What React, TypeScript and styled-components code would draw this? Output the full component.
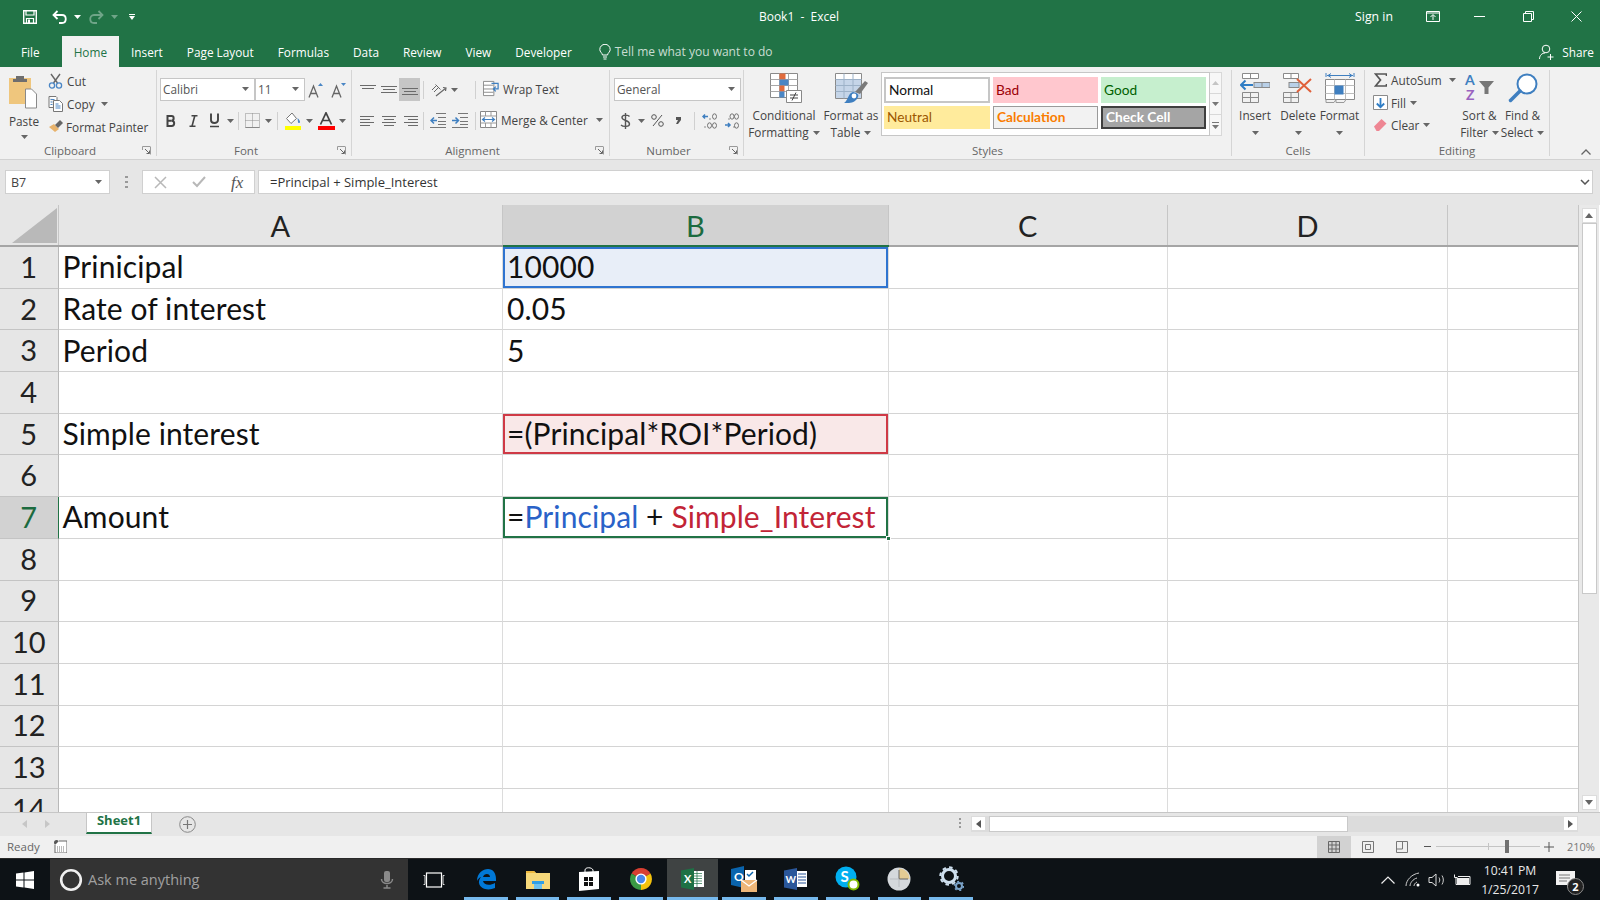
import React from "react";
import styled, { createGlobalStyle } from "styled-components";

const UI = `"Open Sans", "Noto Sans", "Liberation Sans", sans-serif`;
const CELL = `Lato, "Liberation Sans", sans-serif`;

const Global = createGlobalStyle`
  html, body { margin: 0; padding: 0; width: 1600px; height: 900px; overflow: hidden; background: #fff; }
  #root { width: 1600px; height: 900px; }
  * { box-sizing: border-box; }
`;

const Window = styled.div`
  width: 1600px; height: 900px; display: flex; flex-direction: column; font-family: ${UI}; overflow: hidden;
`;
const Svg = styled.svg`display: block; flex-shrink: 0;`;

/* ---------- generic icons ---------- */
const Chev = ({ c = "#666" }: { c?: string }) => (
  <Svg width="7" height="4" viewBox="0 0 7 4"><path d="M0 0h7L3.5 4z" fill={c} /></Svg>
);
const Launcher = () => (
  <Svg width="9" height="9" viewBox="0 0 9 9"><path d="M.5 4V.5H8M8.5 .5V8.5" fill="none" stroke="#9a9a9a" /><path d="M3 3l4 4M4.5 7.5h3v-3" fill="none" stroke="#666" /></Svg>
);
const Lines = ({ ys, xs }: { ys: number[]; xs: [number, number][] }) => (
  <Svg width="16" height="16" viewBox="0 0 16 16">
    {ys.map((y, i) => <path key={i} d={`M${xs[i][0]} ${y + 0.5}H${xs[i][1]}`} stroke="#6b6b6b" />)}
  </Svg>
);

/* ---------- title bar ---------- */
const TitleBar = styled.div`
  height: 33px; background: #217346; display: grid; grid-template-columns: 1fr auto 1fr; align-items: center; color: #fff;
`;
const QuickAccess = styled.div`display: flex; align-items: center; padding-left: 14px;`;
const QatSlot = styled.div<{ $w: number }>`
  width: ${p => p.$w}px; height: 33px; display: flex; align-items: center; justify-content: center;
`;
const TitleText = styled.div`font-size: 12px; white-space: pre; margin-left: -2px;`;
const WindowControls = styled.div`display: flex; align-items: center; justify-content: flex-end;`;
const SignIn = styled.span`font-size: 12.3px; margin-right: 18px;`;
const WinBtn = styled.div<{ $w: number }>`
  width: ${p => p.$w}px; height: 33px; display: flex; align-items: center; justify-content: center;
`;

/* ---------- tabs ---------- */
const TabBar = styled.div`
  height: 34px; background: #217346; display: flex; align-items: flex-end; color: #fff; font-size: 11.8px; padding-left: 9px;
`;
const Tab = styled.div<{ $active?: boolean; $first?: boolean }>`
  height: 31px; padding: 0 12px; display: flex; align-items: center; white-space: nowrap;
  ${p => p.$first ? "margin-right: 10px;" : ""}
  ${p => p.$active ? "background:#f1f1f1;color:#217346;" : ""}
`;
const TellMe = styled.div`
  height: 31px; display: flex; align-items: center; gap: 4px; margin-left: 15px; color: #c9ddd2; white-space: nowrap; font-size: 12px;
`;
const Share = styled.div`
  height: 31px; margin-left: auto; padding-right: 6px; display: flex; align-items: center; gap: 7px;
`;

/* ---------- ribbon ---------- */
const Ribbon = styled.div`
  height: 93px; background: #f1f1f1; border-bottom: 1px solid #d2d2d2; display: flex; padding-top: 3px;
  font-size: 11.8px; color: #444; position: relative;
`;
const Group = styled.div<{ $w: number }>`
  width: ${p => p.$w}px; height: 86px; border-right: 1px solid #d5d5d5; display: flex; flex-direction: column; flex-shrink: 0;
`;
const GroupBody = styled.div`height: 73px; display: flex; flex-shrink: 0;`;
const GroupFoot = styled.div`
  height: 16px; margin-bottom: -3px; padding-bottom: 2px; display: flex; align-items: center; color: #666; font-size: 11.5px;
`;
const GroupLabel = styled.div`flex: 1; text-align: center;`;
const LauncherSlot = styled.div`width: 16px; padding-left: 2px; display: flex; justify-content: flex-start;`;

const PasteBtn = styled.div`
  width: 48px; display: flex; flex-direction: column; align-items: center; padding-top: 3px;
`;
const BigText = styled.div`line-height: 17px; height: 17px; white-space: nowrap; text-align: center; display: flex; align-items: center; justify-content: center; gap: 4px;`;
const SmallCol = styled.div`display: flex; flex-direction: column; margin-top: -1px;`;
const SmallRow = styled.div`
  height: 23px; display: flex; align-items: center; gap: 3px; white-space: nowrap;
`;
const EditCol = styled.div`
  width: 93px; padding-left: 8px; margin-top: -1px; display: flex; flex-direction: column;
  & > div { height: 22.5px; gap: 4px; }
`;
const IconBox = styled.div<{ $w: number }>`
  width: ${p => p.$w}px; display: flex; justify-content: center; flex-shrink: 0;
`;
const Stack = styled.div<{ $pl: number }>`
  flex: 1; display: flex; flex-direction: column; gap: 8px; padding: 8px 0 0 ${p => p.$pl}px;
`;
const ToolRow = styled.div`height: 23px; display: flex; align-items: center;`;
const Combo = styled.div<{ $w: number }>`
  width: ${p => p.$w}px; height: 23px; background: #fff; border: 1px solid #c6c6c6; display: flex; align-items: center;
  padding: 0 5px 2px 2px; justify-content: space-between; color: #555; flex-shrink: 0;
`;
const ToolBtn = styled.div<{ $w: number; $on?: boolean }>`
  width: ${p => p.$w}px; height: 23px; display: flex; align-items: center; justify-content: center; flex-shrink: 0;
  ${p => p.$on ? "background:#c6c6c6;" : ""}
`;
const VSep = styled.div<{ $m?: number; $r?: number }>`
  width: 1px; height: 18px; background: #d0d0d0; margin: 0 ${p => p.$r ?? p.$m ?? 4}px 0 ${p => p.$m ?? 4}px; flex-shrink: 0;
`;
const WithText = styled.div<{ $gap?: number }>`
  display: flex; align-items: center; gap: ${p => p.$gap ?? 4}px; white-space: nowrap; padding-bottom: 2px;
`;
const BigBtn = styled.div<{ $w: number; $ml?: number }>`
  width: ${p => p.$w}px; margin-left: ${p => p.$ml ?? 0}px; display: flex; flex-direction: column; align-items: center; padding-top: 3px; flex-shrink: 0;
`;
const BigIcon = styled.div<{ $shift?: number }>`
  height: 34px; display: flex; align-items: flex-start; justify-content: center; padding-left: ${p => p.$shift ?? 0}px;
`;
const Gallery = styled.div`
  width: 341px; height: 64px; margin: 2px 0 0 -1px; display: flex; flex-shrink: 0; position: relative;
`;
const GalleryGrid = styled.div`
  width: 329px; height: 64px; background: #fff; border: 1px solid #c6c6c6; display: grid;
  grid-template-columns: 106px 105px 105px; grid-template-rows: 26px 23px; column-gap: 3px; row-gap: 3px; padding: 4px 0 0 2px;
`;
const Style = styled.div<{ $bg: string; $fg: string; $bd?: string; $bw?: number; $bold?: boolean }>`
  background: ${p => p.$bg}; color: ${p => p.$fg}; font-family: ${CELL}; font-size: 13.7px; padding: 0 0 2px 3px;
  font-weight: ${p => p.$bold ? 700 : 400}; display: flex; align-items: center; height: 100%;
  ${p => p.$bd ? `border: ${p.$bw ?? 1}px solid ${p.$bd};` : ""}
`;
const GalleryScroll = styled.div`
  width: 12px; height: 64px; display: flex; flex-direction: column; gap: 0;
`;
const GalleryBtn = styled.div`
  flex: 1; background: #f7f7f7; border: 1px solid #d8d8d8; border-left: 0; display: flex; align-items: center; justify-content: center;
  & + & { border-top: 0; }
`;
const Collapse = styled.div`position: absolute; right: 9px; bottom: 4px;`;

/* ---------- formula bar ---------- */
const FormulaBar = styled.div`
  height: 45px; background: #e6e6e6; display: flex; align-items: flex-start; padding: 10px 7px 0 5px; flex-shrink: 0;
`;
const NameBox = styled.div`
  width: 105px; height: 24px; background: #fff; border: 1px solid #d0d0d0; display: flex; align-items: center; justify-content: space-between;
  padding: 0 7px 0 5px; font-size: 12.5px; color: #444;
`;
const Grip = styled.div`
  width: 32px; height: 24px; display: flex; align-items: center; justify-content: center;
`;
const FxBox = styled.div`
  width: 113px; height: 24px; background: #fff; border: 1px solid #d0d0d0; display: flex; align-items: center;
  padding-left: 11px; gap: 25px; flex-shrink: 0;
`;
const FormulaInput = styled.div`
  flex: 1; margin-left: 3px; height: 24px; background: #fff; border: 1px solid #d0d0d0; display: flex; align-items: center;
  justify-content: space-between; padding: 0 2px 0 11px; font-family: ${UI}; font-size: 13px; color: #333;
`;
const FxGlyph = styled.span`font-family: "Liberation Serif", serif; font-style: italic; font-size: 17px; color: #555; line-height: 1;`;

/* ---------- sheet ---------- */
const SheetArea = styled.div`height: 607px; display: flex; flex-shrink: 0;`;
const GridWrap = styled.div`width: 1579px; overflow: hidden; background: #fff; border-right: 1px solid #c6c6c6;`;
const cols = "58.5px 444.5px 385.5px 279.5px 280px 131px";
const HeaderRow = styled.div`
  display: grid; grid-template-columns: ${cols}; height: 42px; background: #e6e6e6; border-bottom: 2px solid #a5a5a5;
`;
const Corner = styled.div`
  position: relative; display: flex; justify-content: flex-end; align-items: flex-end; padding: 0 1px 2px 0; border-right: 1px solid #c6c6c6;
`;
const ColHead = styled.div<{ $active?: boolean }>`
  display: flex; align-items: center; justify-content: center; font-family: ${CELL}; font-size: 29px; color: ${p => p.$active ? "#1c6b3f" : "#222"};
  border-right: 1px solid #c6c6c6; height: 40px;
  ${p => p.$active ? "background:#d2d2d2;box-shadow: 0 2px 0 #217346;" : ""}
`;
const Row = styled.div`
  display: grid; grid-template-columns: ${cols}; height: 41.7px;
`;
const RowHead = styled.div<{ $active?: boolean }>`
  display: flex; align-items: center; justify-content: center; font-family: ${CELL}; font-size: 29px; padding-bottom: 2px;
  background: ${p => p.$active ? "#d2d2d2" : "#e6e6e6"}; color: ${p => p.$active ? "#1c6b3f" : "#222"};
  border-bottom: 1px solid #c4c4c4; border-right: 1px solid ${p => p.$active ? "#217346" : "#b8b8b8"};
`;
const Cell = styled.div<{ $fill?: string; $bd?: string }>`
  display: flex; align-items: center; padding: 0 0 2px 4px; font-family: ${CELL}; font-size: 30px; color: #111; letter-spacing: 0.1px; white-space: nowrap;
  position: relative; background: ${p => p.$fill ?? "#fff"};
  border-right: 1px solid #dcdcdc; border-bottom: 1px solid #d4d4d4;
  ${p => p.$bd ? `box-shadow: inset 0 0 0 2px ${p.$bd}; z-index: 1;` : ""}
`;
const Handle = styled.span`
  position: absolute; right: -3px; bottom: -3px; width: 5px; height: 5px; background: #217346; border: 1px solid #fff;
`;
const Ref = styled.span<{ $c: string }>`color: ${p => p.$c};`;
const VScroll = styled.div`
  width: 20px; background: #e9e9e9; display: flex; flex-direction: column; align-items: center; padding: 3px 0 2px;
`;
const ScrollBtn = styled.div`
  width: 15px; height: 15px; background: #fff; border: 1px solid #dcdcdc; display: flex; align-items: center; justify-content: center; flex-shrink: 0;
`;
const VThumb = styled.div`width: 15px; height: 371px; background: #fff; border: 1px solid #c9c9c9; flex-shrink: 0;`;
const Spacer = styled.div`flex: 1;`;

/* ---------- sheet tabs ---------- */
const SheetBar = styled.div`
  height: 24px; background: #e6e6e6; border-top: 1px solid #c6c6c6; display: flex; align-items: flex-start; flex-shrink: 0;
`;
const NavArrows = styled.div`
  width: 86px; height: 21px; display: flex; align-items: center; gap: 18px; padding-left: 22px;
`;
const SheetTab = styled.div`
  width: 66px; height: 21px; background: #fff; color: #217346; font-weight: 700; font-size: 13px; display: flex; align-items: center; justify-content: center;
  border: 1px solid #c6c6c6; border-top: 0; border-bottom: 2px solid #217346; padding-bottom: 5px;
`;
const AddSheet = styled.div`
  margin-left: 27px; height: 23px; display: flex; align-items: center;
`;
const HScroll = styled.div`
  margin: 3px 22px 0 9px; width: 607px; height: 16px; display: flex; background: #dcdcdc; align-items: stretch; position: relative;
`;
const HThumb = styled.div`width: 359px; margin-left: 3px; background: #fff; border: 1px solid #c9c9c9;`;
const HGrip = styled.div`display: flex; align-items: center; height: 21px; margin-left: auto;`;

/* ---------- status ---------- */
const StatusBar = styled.div`
  height: 22px; background: #f0f0f0; display: flex; align-items: center; padding: 0 0 1px 7px; font-size: 11.5px; color: #666; flex-shrink: 0;
`;
const StatusRight = styled.div`margin-left: auto; display: flex; align-items: center; height: 22px;`;
const ViewBtn = styled.div<{ $on?: boolean }>`
  width: 34px; height: 22px; display: flex; align-items: center; justify-content: center; ${p => p.$on ? "background:#d2d2d2;" : ""}
`;
const ZoomTrack = styled.div`
  width: 104px; height: 1px; background: #c4c4c4; position: relative; margin: 0 4px;
`;
const ZoomMark = styled.span`position: absolute; left: 52px; top: -3px; width: 1px; height: 7px; background: #c4c4c4;`;
const ZoomThumb = styled.span`position: absolute; left: 69px; top: -6px; width: 4px; height: 13px; background: #707070;`;
const ZoomPct = styled.div`width: 46px; padding-left: 13px; font-size: 11px; color: #777; white-space: nowrap;`;
const ZoomSign = styled.div<{ $ml: number }>`
  margin-left: ${p => p.$ml}px; display: flex; align-items: center;
`;

/* ---------- taskbar ---------- */
const Taskbar = styled.div`
  height: 42px; background: #0d1216; border-top: 1px solid #2a2a2a; display: flex; align-items: stretch; flex-shrink: 0; color: #fff;
`;
const Start = styled.div`width: 50px; display: flex; align-items: center; justify-content: center;`;
const Search = styled.div`
  width: 358px; background: #333; display: flex; align-items: center; padding: 0 14px 0 9px; color: #a0a0a0; font-size: 14.5px; gap: 5px;
`;
const SearchText = styled.span`flex: 1;`;
const TaskView = styled.div`width: 52px; display: flex; align-items: center; justify-content: center;`;
const App = styled.div<{ $active?: boolean }>`
  width: 51.7px; display: flex; align-items: center; justify-content: center; position: relative; padding-bottom: 2px;
  ${p => p.$active ? "background:#3f4343;" : ""}
  &::after { content: ""; position: absolute; left: ${p => p.$active ? 0 : 4}px; right: ${p => p.$active ? 0 : 4}px; bottom: 0; height: 3px; background: #76b9ed; }
`;
const Tray = styled.div`margin-left: auto; display: flex; align-items: center; padding-right: 12px;`;
const TraySlot = styled.div`width: 24.5px; display: flex; align-items: center; justify-content: center;`;
const Clock = styled.div`
  width: 64px; margin-left: 4px; text-align: center; font-size: 12.2px; line-height: 19px; color: #e8e8e8; white-space: nowrap;
`;
const Notify = styled.div`width: 46px; display: flex; align-items: center; justify-content: center; position: relative; height: 100%;`;
const NotifyBadge = styled.span`
  position: absolute; left: 25px; top: 19px; width: 17px; height: 17px; border-radius: 50%; background: #222; border: 1px solid #888;
  font-size: 11px; font-weight: 700; display: flex; align-items: center; justify-content: center; color: #fff;
`;

/* ---------- ribbon icons ---------- */
const PasteIcon = () => (
  <Svg width="30" height="40" viewBox="0 0 30 40">
    <rect x="0" y="5" width="22" height="26" fill="#efc67d" />
    <path d="M7 3h8v3h3v3H4V6h3z" fill="#6e6e6e" />
    <path d="M16.5 16h6l5 5v14h-11z" fill="#fff" stroke="#8a8a8a" />
  </Svg>
);
const CutIcon = () => (
  <Svg width="16" height="16" viewBox="0 0 16 16">
    <path d="M3 1l6.5 9M12 1L5.5 10" stroke="#666" strokeWidth="1.4" fill="none" />
    <circle cx="4" cy="12.5" r="2.6" fill="none" stroke="#4a86c5" strokeWidth="1.3" />
    <circle cx="11" cy="12.5" r="2.6" fill="none" stroke="#4a86c5" strokeWidth="1.3" />
  </Svg>
);
const CopyIcon = () => (
  <Svg width="16" height="16" viewBox="0 0 16 16">
    <path d="M1 .5h7l1 1V5M1 .5v11h4" fill="#fff" stroke="#777" />
    <path d="M5.500 4.500h6l3 3v8h-9z" fill="#fff" stroke="#777" />
    <path d="M7.500 8h3M7.500 10h5M7.500 12h5M2.500 3.500h4M2.500 6h2M2.500 8.500h2" stroke="#4a86c5" />
  </Svg>
);
const PainterIcon = () => (
  <Svg width="15" height="14" viewBox="0 0 15 14">
    <path d="M1 7l5-3 5 5-4 3z" fill="#e8b36c" />
    <path d="M7 5l5-5 3 3-5 5z" fill="#666" />
  </Svg>
);
const GrowA = ({ up }: { up: boolean }) => (
  <Svg width="20" height="16" viewBox="0 0 20 16">
    <path d="M2 15.500L6.500 4 11 15.500M3.800 11.500h5.400" fill="none" stroke="#666" strokeWidth="1.3" />
    <path d={up ? "M11 4l2.500-3L16 4z" : "M11 1l2.500 3L16 1z"} fill="#4a86c5" />
  </Svg>
);
const BoldI = () => (<Svg width="10" height="12" viewBox="0 0 10 12"><path d="M1.500 1h4.200c2.600 0 2.600 4.500 0 4.700 3.300 0 3.300 5.300 0 5.300H1.500zM1.500 5.800h4" fill="none" stroke="#444" strokeWidth="2" /></Svg>);
const ItalicI = () => (<Svg width="9" height="12" viewBox="0 0 9 12"><path d="M2.500 .8h6M.5 11.200h6M5.800 .8L3 11.200" fill="none" stroke="#444" strokeWidth="1.6" /></Svg>);
const UnderI = () => (<Svg width="11" height="15" viewBox="0 0 11 15"><path d="M2 .5v6.500c0 4 7 4 7 0V.5" fill="none" stroke="#444" strokeWidth="1.9" /><path d="M1 13.500h9" stroke="#444" strokeWidth="1.5" /></Svg>);
const BordersI = () => (<Svg width="15" height="15" viewBox="0 0 15 15"><path d="M.5 .5h14v14H.5zM7.500 .5v14M.5 7.500h14" fill="none" stroke="#8c8c8c" strokeDasharray="1 1" /><path d="M.5 14.500h14" stroke="#888" /></Svg>);
const FillI = () => (
  <Svg width="17" height="18" viewBox="0 0 17 18">
    <path d="M7 1L1.500 6.500l4.500 5 5.500-5z" fill="#fff" stroke="#777" />
    <path d="M12.500 6c2 2 2.500 3 2.500 4 0 1.400-2 1.400-2 0z" fill="#4a86c5" />
    <rect x="0" y="14" width="16" height="4" fill="#ffff00" />
  </Svg>
);
const FontColorI = () => (
  <Svg width="17" height="18" viewBox="0 0 17 18">
    <path d="M2.500 12.500L8 .8l5.500 11.700M4.500 8.500h7" fill="none" stroke="#444" strokeWidth="1.7" />
    <rect x="0" y="14" width="17" height="4" fill="#ff0000" />
  </Svg>
);
const WrapI = () => (
  <Svg width="17" height="17" viewBox="0 0 18 17">
    <path d="M.5 1h11v15h-11z" fill="#fff" stroke="#8a8a8a" />
    <path d="M.5 5h10.500M.5 9h10.500M.5 12.500h10.500" stroke="#8a8a8a" />
    <path d="M9 3h7v6h-4M13.500 6.500L11 9l2.500 2.500" fill="none" stroke="#3f7fc0" strokeWidth="1.3" />
  </Svg>
);
const MergeI = () => (
  <Svg width="17" height="17" viewBox="0 0 17 17">
    <path d="M.5 .5h16v16H.5z" fill="#fff" stroke="#888" />
    <path d="M.5 5h16M.5 12h16M5.500 .5V5M11 .5V5M5.500 12v4.500M11 12v4.500" stroke="#999" />
    <path d="M2.500 8.500h12M5 6.500l-2.500 2 2.500 2M12 6.500l2.500 2-2.500 2" fill="none" stroke="#3f7fc0" strokeWidth="1.2" />
  </Svg>
);
const OrientI = () => (
  <Svg width="17" height="14" viewBox="0 0 17 14">
    <path d="M2 7l5-5M4 9l5-5M5.500 1.500l5 5" fill="none" stroke="#666" />
    <path d="M6 13l10-8M13 4.500l3 .5-.5 3" fill="none" stroke="#666" strokeWidth="1.2" />
  </Svg>
);
const IndentI = ({ out }: { out: boolean }) => (
  <Svg width="16" height="15" viewBox="0 0 16 15">
    <path d="M6 .5h10M8 4.500h8M8 8.500h8M8 11.500h8M0 14.500h16" stroke="#777" />
    <path d={out ? "M7 7.500H1M4 4.500l-3 3 3 3" : "M0 7.500h6M3.500 4.500l3 3-3 3"} fill="none" stroke="#3f7fc0" strokeWidth="1.5" />
  </Svg>
);
const DecI = ({ inc }: { inc: boolean }) => (
  <Svg width="18" height="16" viewBox="0 0 18 16">
    {inc ? <path d="M6 3.500H1M3 1.500l-2 2 2 2" fill="none" stroke="#3f7fc0" strokeWidth="1.5" /> : <path d="M1 12h5M4 10l2 2-2 2" fill="none" stroke="#3f7fc0" strokeWidth="1.5" />}
    <circle cx={inc ? 8 : 5} cy={inc ? 6 : 6} r=".7" fill="#666" />
    <circle cx={inc ? 3 : 10} cy={inc ? 14 : 14} r=".7" fill="#666" />
    <ellipse cx="12.500" cy={inc ? 3.500 : 3.500} rx="2" ry="2.700" fill="none" stroke="#666" strokeWidth=".9" />
    <ellipse cx="12.500" cy="12.500" rx="2" ry="2.700" fill="none" stroke="#666" strokeWidth=".9" />
    {inc ? <ellipse cx="7.500" cy="12.500" rx="2" ry="2.700" fill="none" stroke="#666" strokeWidth=".9" /> : <ellipse cx="8" cy="3.500" rx="2" ry="2.700" fill="none" stroke="#666" strokeWidth=".9" />}
  </Svg>
);
const CondI = () => (
  <Svg width="32" height="30" viewBox="0 0 32 30">
    <path d="M.5 .5h27v24H.5z" fill="#fff" stroke="#8a8a8a" />
    <path d="M.5 6.500h27M.5 12.500h27M.5 18.500h27M9.500 .5v24M18.500 .5v24" stroke="#a8a8a8" />
    <rect x="9.500" y=".5" width="6" height="6" fill="#e06b3d" /><rect x="9.500" y="6.500" width="9" height="6" fill="#4a86c5" />
    <rect x="9.500" y="12.500" width="5" height="6" fill="#e06b3d" /><rect x="9.500" y="18.500" width="5" height="6" fill="#4a86c5" />
    <path d="M16.500 17.500h15v12h-15z" fill="#fff" stroke="#888" />
    <path d="M20 22h8M20 25h8M26 19.500l-4 8" stroke="#444" strokeWidth="1" fill="none" />
  </Svg>
);
const TableI = () => (
  <Svg width="33" height="30" viewBox="0 0 33 30">
    <path d="M.5 .5h26v25H.5z" fill="#fff" stroke="#8a8a8a" />
    <rect x="1" y="6" width="25" height="19" fill="#c5d5e8" />
    <path d="M.5 6.500h26M.5 12.500h26M.5 18.500h26M9 .5v25M18 .5v25" stroke="#9db2c8" />
    <path d="M20 19L30 8l3 2-8 11z" fill="#7a7a7a" />
    <path d="M9 30c4-2 4-10 9-11 5 1 6 3 5 5-1 3-5 6-9 6z" fill="#3f7fc0" />
    <circle cx="19" cy="23" r="2.400" fill="#fff" />
  </Svg>
);
const InsertI = () => (
  <Svg width="30" height="30" viewBox="0 0 30 30">
    <path d="M2.500 .5h16v5h-16zM10.500 .5v5" fill="#fff" stroke="#8a8a8a" />
    <rect x="14" y="9.500" width="16" height="5" fill="#b9d0e8" stroke="#8a8a8a" /><path d="M22 9.500v5" stroke="#8a8a8a" />
    <path d="M13 12H1M5.500 7.500L1 12l4.500 4.500" fill="none" stroke="#2f7dc5" strokeWidth="2" />
    <path d="M2.500 19.500h16v10h-16zM2.500 24.500h16M10.500 19.500v10" fill="none" stroke="#8a8a8a" />
  </Svg>
);
const DeleteI = () => (
  <Svg width="30" height="30" viewBox="0 0 30 30">
    <path d="M.5 .5h15v5H.5zM8 .5v5" fill="#fff" stroke="#8a8a8a" />
    <rect x="6" y="9.500" width="10" height="5" fill="#b9d0e8" stroke="#8a8a8a" />
    <path d="M.5 19.500h15v10H.5zM.5 24.500h15M8 19.500v10" fill="none" stroke="#8a8a8a" />
    <path d="M14 6l14 13M28 6L14 19" stroke="#e0603a" strokeWidth="2" />
  </Svg>
);
const FormatI = () => (
  <Svg width="30" height="31" viewBox="0 0 30 31">
    <path d="M1 0v4M29 0v4M2 2.500h26M6 .5l-3 2 3 2M24 .5l3 2-3 2" fill="none" stroke="#3f7fc0" />
    <path d="M.5 6.500h29v20H.5z" fill="#fff" stroke="#8a8a8a" />
    <path d="M.5 12.500h29M.5 20.500h29M9.500 6.500v20M20.500 6.500v20" stroke="#bdbdbd" />
    <rect x="9.500" y="12.500" width="9" height="9" fill="#3f7fc0" />
    <path d="M1 26.500v3h8l2-3M11 26.500v3h8l2-3" fill="none" stroke="#999" />
  </Svg>
);
const SigmaI = () => (<Svg width="13" height="14" viewBox="0 0 13 14"><path d="M12.500 3V1H1.500l5 6-5 6h11v-2" fill="none" stroke="#555" strokeWidth="1.700" /></Svg>);
const FillDownI = () => (
  <Svg width="15" height="15" viewBox="0 0 15 15">
    <path d="M.5 .5h14v14H.5z" fill="#fff" stroke="#8a8a8a" />
    <path d="M7.500 3v9M3.800 8.500l3.700 3.700 3.700-3.700" fill="none" stroke="#2f7dc5" strokeWidth="1.800" />
  </Svg>
);
const EraserI = () => (<Svg width="14" height="14" viewBox="0 0 14 14"><path d="M1 8.500L8.500 1l5 4.500L6 13H3.500z" fill="#ee8693" /></Svg>);
const SortI = () => (
  <Svg width="30" height="30" viewBox="0 0 30 30" overflow="visible">
    <text x="0" y="12" fontFamily="Lato, sans-serif" fontWeight="700" fontSize="14" fill="#3f7fc0">A</text>
    <text x="1" y="27" fontFamily="Lato, sans-serif" fontWeight="700" fontSize="14" fill="#9a63c0">Z</text>
    <path d="M14 8h15l-5.500 6.500V21h-4v-6.500z" fill="#777" />
  </Svg>
);
const FindI = () => (
  <Svg width="30" height="30" viewBox="0 0 30 30">
    <circle cx="19" cy="11" r="9.500" fill="#fff" stroke="#3f7fc0" strokeWidth="2" />
    <path d="M12 18L2.500 27.500" stroke="#3f7fc0" strokeWidth="3.500" strokeLinecap="round" />
  </Svg>
);

/* ---------- taskbar icons ---------- */
const WinLogo = () => (<Svg width="18" height="18" viewBox="0 0 18 18"><path d="M0 2.600L7.500 1.500V8.500H0zM8.500 1.400L18 0v8.500H8.500zM0 9.500h7.500v7L0 15.400zM8.500 9.500H18V18l-9.500-1.400z" fill="#fff" /></Svg>);
const Cortana = () => (<Svg width="24" height="24" viewBox="0 0 24 24"><circle cx="12" cy="12" r="9.800" fill="none" stroke="#f0f0f0" strokeWidth="2.600" /></Svg>);
const Mic = () => (<Svg width="14" height="18" viewBox="0 0 14 18"><rect x="4" y="0" width="6" height="11" rx="2" fill="#8a8a8a" /><path d="M1.500 8c0 6 11 6 11 0M7 14v3M3.500 17h7" fill="none" stroke="#8a8a8a" strokeWidth="1.500" /></Svg>);
const TaskViewI = () => (<Svg width="22" height="16" viewBox="0 0 22 16"><rect x="3.500" y="1" width="15" height="14" fill="none" stroke="#fff" strokeWidth="1.200" /><path d="M.5 3.500h1.500v9H.5M21.500 3.500H20v9h1.500" fill="none" stroke="#ddd" /></Svg>);
const EdgeI = () => (
  <Svg width="22" height="22" viewBox="0 0 22 22">
    <path d="M2 13C2 5 8 1 13 1c5 0 8 4 8 10v2H8c.5 4 7 5 12 2v5c-7 3-15 1-16-5-.3-2 .5-4 2-6C4.500 9.500 3 11 2 13zM8 9h7c0-4-6-4-7 0z" fill="#0078d7" fillRule="evenodd" />
  </Svg>
);
const FolderI = () => (
  <Svg width="24" height="20" viewBox="0 0 24 20">
    <path d="M0 2h8l2 2h14v16H0z" fill="#f6d87a" /><path d="M0 2h8l2 2H0z" fill="#eeb93f" />
    <rect x="6" y="12" width="12" height="3" fill="#2f9fe6" /><rect x="8" y="15" width="8" height="5" fill="#6cc1ef" />
  </Svg>
);
const StoreI = () => (
  <Svg width="22" height="24" viewBox="0 0 22 24">
    <path d="M7 5V3c0-3 7-3 8 0v2" fill="none" stroke="#fff" />
    <path d="M1 5l20-1v18l-20 2z" fill="#fff" />
    <path d="M6 10h4v4H6zM11 10h4v4h-4zM6 15h4v4H6zM11 15h4v4h-4z" fill="#111" />
  </Svg>
);
const ChromeI = () => (
  <Svg width="24" height="24" viewBox="0 0 24 24">
    <path d="M12 12L2.500 6.500A11 11 0 0 1 21.500 6.500z" fill="#d83f32" />
    <path d="M12 12l9.500-5.500A11 11 0 0 1 12 23z" fill="#f4c20d" />
    <path d="M12 12v11A11 11 0 0 1 2.500 6.500z" fill="#3a9a44" />
    <circle cx="12" cy="12" r="5.600" fill="#fff" /><circle cx="12" cy="12" r="4.200" fill="#4a87ea" />
  </Svg>
);
const ExcelI = () => (
  <Svg width="23" height="22" viewBox="0 0 23 22">
    <rect x="11" y="3" width="12" height="16" fill="#fff" />
    <path d="M13 5.500h8M13 8h8M13 10.500h8M13 13h8M13 15.500h8M16 3v16" stroke="#1e7145" strokeWidth=".7" />
    <path d="M0 2.500L13 0v22L0 19.500z" fill="#1e7145" />
    <text x="3" y="15" fontFamily="Lato, sans-serif" fontWeight="700" fontSize="11" fill="#fff">X</text>
  </Svg>
);
const OutlookI = () => (
  <Svg width="27" height="26" viewBox="0 0 27 26">
    <rect x="14" y="4" width="11" height="10" fill="#fff" />
    <path d="M16 8l2 2 4-4" fill="none" stroke="#0a64ad" strokeWidth="1.500" />
    <path d="M0 3L13 0v22L0 19z" fill="#0a64ad" />
    <text x="3" y="15" fontFamily="Lato, sans-serif" fontWeight="700" fontSize="12" fill="#fff">O</text>
    <rect x="10" y="14" width="16" height="12" fill="#eeb678" />
    <path d="M10 14l8 6 8-6" fill="none" stroke="#fff" strokeWidth="1.200" />
  </Svg>
);
const WordI = () => (
  <Svg width="23" height="22" viewBox="0 0 23 22">
    <rect x="11" y="3" width="12" height="16" fill="#fff" />
    <path d="M14 6h8M14 9h8M14 12h8M14 15h8" stroke="#2b579a" strokeWidth="1.200" />
    <path d="M0 2.500L13 0v22L0 19.500z" fill="#2b579a" />
    <text x="1.500" y="15" fontFamily="Lato, sans-serif" fontWeight="700" fontSize="10" fill="#fff">W</text>
  </Svg>
);
const SkypeI = () => (
  <Svg width="25" height="25" viewBox="0 0 25 25">
    <circle cx="11" cy="11" r="10.500" fill="#00aff0" />
    <text x="5.500" y="16" fontFamily="Lato, sans-serif" fontWeight="700" fontSize="15" fill="#fff">S</text>
    <circle cx="18.500" cy="18.500" r="5" fill="#fff" stroke="#7fba00" strokeWidth="2" />
  </Svg>
);
const ClockI = () => (
  <Svg width="24" height="24" viewBox="0 0 24 24">
    <circle cx="12" cy="12" r="11.500" fill="#d4d8dc" />
    <path d="M12 12V1.500A10.500 10.500 0 0 1 22.500 12z" fill="#e3cb94" />
    <path d="M12 3v9h9" fill="none" stroke="#666" />
    <path d="M12 12v8M3 12h9" stroke="#b8bcc0" />
  </Svg>
);
const GearI = () => (
  <Svg width="25" height="25" viewBox="0 0 25 25">
    <circle cx="10" cy="10" r="6.500" fill="none" stroke="#cfe0ef" strokeWidth="3" />
    <circle cx="10" cy="10" r="8.700" fill="none" stroke="#cfe0ef" strokeWidth="2" strokeDasharray="3.500 3.300" />
    <circle cx="20" cy="20" r="3" fill="none" stroke="#7aa2c8" strokeWidth="2" />
    <circle cx="20" cy="20" r="4.500" fill="none" stroke="#7aa2c8" strokeWidth="1.500" strokeDasharray="2 2.700" />
  </Svg>
);

const App_ = () => (
  <Window>
    <Global />
    <TitleBar>
      <QuickAccess>
        <QatSlot $w={31}>
          <Svg width="14" height="14" viewBox="0 0 14 14"><path d="M.7 .7h12.600v12.600H.7z" fill="none" stroke="#fff" strokeWidth="1.400" /><path d="M3 1v4h8V1M3.500 13V8.500h7V13" fill="none" stroke="#fff" strokeWidth="1.200" /><rect x="5" y="9.500" width="2" height="3.500" fill="#fff" /></Svg>
        </QatSlot>
        <QatSlot $w={29}>
          <Svg width="16" height="14" viewBox="0 0 16 14"><path d="M5.500 1L1.500 5l4 4" fill="none" stroke="#fff" strokeWidth="1.800" /><path d="M2 5h8c5 0 5 8 0 8H7" fill="none" stroke="#fff" strokeWidth="1.800" /></Svg>
        </QatSlot>
        <QatSlot $w={7}><Chev c="#fff" /></QatSlot>
        <QatSlot $w={30}>
          <Svg width="16" height="14" viewBox="0 0 16 14"><path d="M10.500 1l4 4-4 4" fill="none" stroke="#6fa588" strokeWidth="1.800" /><path d="M14 5H6c-5 0-5 8 0 8h3" fill="none" stroke="#6fa588" strokeWidth="1.800" /></Svg>
        </QatSlot>
        <QatSlot $w={7}><Chev c="#6fa588" /></QatSlot>
        <QatSlot $w={28}>
          <Svg width="6" height="6" viewBox="0 0 6 6"><path d="M0 .5h6" stroke="#fff" /><path d="M0 2h6L3 6z" fill="#fff" /></Svg>
        </QatSlot>
      </QuickAccess>
      <TitleText>Book1  -  Excel</TitleText>
      <WindowControls>
        <SignIn>Sign in</SignIn>
        <WinBtn $w={44}>
          <Svg width="14" height="11" viewBox="0 0 14 11"><path d="M.5 .5h13v10H.5zM.5 2h13" fill="none" stroke="#fff" /><path d="M7 9V4M4.500 6L7 3.500 9.500 6" fill="none" stroke="#fff" /></Svg>
        </WinBtn>
        <WinBtn $w={49}><Svg width="11" height="1" viewBox="0 0 11 1"><path d="M0 .5h11" stroke="#fff" /></Svg></WinBtn>
        <WinBtn $w={48}><Svg width="11" height="11" viewBox="0 0 11 11"><path d="M.5 2.500h8v8h-8zM2.500 2.500v-2h8v8h-2" fill="none" stroke="#fff" /></Svg></WinBtn>
        <WinBtn $w={48}><Svg width="11" height="11" viewBox="0 0 11 11"><path d="M.5 .5l10 10M10.500 .5l-10 10" stroke="#fff" /></Svg></WinBtn>
      </WindowControls>
    </TitleBar>

    <TabBar>
      <Tab $first>File</Tab>
      <Tab $active>Home</Tab>
      <Tab>Insert</Tab>
      <Tab>Page Layout</Tab>
      <Tab>Formulas</Tab>
      <Tab>Data</Tab>
      <Tab>Review</Tab>
      <Tab>View</Tab>
      <Tab>Developer</Tab>
      <TellMe>
        <Svg width="12" height="16" viewBox="0 0 12 16"><path d="M3.500 11C3 8.500 .8 8 .8 5.500a5.200 5.200 0 0 1 10.400 0C11.200 8 9 8.500 8.500 11z" fill="none" stroke="#fff" /><path d="M4 13h4M4.500 15h3" stroke="#fff" /></Svg>
        Tell me what you want to do
      </TellMe>
      <Share>
        <Svg width="16" height="16" viewBox="0 0 16 16"><circle cx="7" cy="5" r="3.800" fill="none" stroke="#fff" /><path d="M.5 15c0-3.500 2.500-6 5.500-6M11.500 10v6M8.500 13h6" fill="none" stroke="#fff" /></Svg>
        Share
      </Share>
    </TabBar>

    <Ribbon>
      <Group $w={157}>
        <GroupBody>
          <PasteBtn>
            <PasteIcon />
            <BigText>Paste</BigText>
            <BigText><Chev /></BigText>
          </PasteBtn>
          <SmallCol>
            <SmallRow><CutIcon />Cut</SmallRow>
            <SmallRow><CopyIcon />Copy<IconBox $w={14}><Chev /></IconBox></SmallRow>
            <SmallRow><PainterIcon />Format Painter</SmallRow>
          </SmallCol>
        </GroupBody>
        <GroupFoot><GroupLabel>Clipboard</GroupLabel><LauncherSlot><Launcher /></LauncherSlot></GroupFoot>
      </Group>

      <Group $w={195}>
        <GroupBody>
          <Stack $pl={3}>
            <ToolRow>
              <Combo $w={95}>Calibri<Chev /></Combo>
              <Combo $w={50}>11<Chev /></Combo>
              <ToolBtn $w={24}><GrowA up /></ToolBtn>
              <ToolBtn $w={21}><GrowA up={false} /></ToolBtn>
            </ToolRow>
            <ToolRow>
              <ToolBtn $w={22}><BoldI /></ToolBtn>
              <ToolBtn $w={22}><ItalicI /></ToolBtn>
              <ToolBtn $w={21}><UnderI /></ToolBtn>
              <ToolBtn $w={11}><Chev /></ToolBtn>
              <VSep $m={2} />
              <ToolBtn $w={22}><BordersI /></ToolBtn>
              <ToolBtn $w={10}><Chev /></ToolBtn>
              <VSep $m={4} />
              <ToolBtn $w={22}><FillI /></ToolBtn>
              <ToolBtn $w={10}><Chev /></ToolBtn>
              <ToolBtn $w={24}><FontColorI /></ToolBtn>
              <ToolBtn $w={8}><Chev /></ToolBtn>
            </ToolRow>
          </Stack>
        </GroupBody>
        <GroupFoot><GroupLabel>Font</GroupLabel><LauncherSlot><Launcher /></LauncherSlot></GroupFoot>
      </Group>

      <Group $w={258}>
        <GroupBody>
          <Stack $pl={5}>
            <ToolRow>
              <ToolBtn $w={21}><Lines ys={[3, 6]} xs={[[0, 16], [2, 14]]} /></ToolBtn>
              <ToolBtn $w={21}><Lines ys={[4, 7, 10]} xs={[[0, 16], [2, 14], [0, 16]]} /></ToolBtn>
              <ToolBtn $w={21} $on><Lines ys={[6, 9, 12]} xs={[[0, 16], [2, 14], [0, 16]]} /></ToolBtn>
              <VSep $m={3} />
              <ToolBtn $w={22}><OrientI /></ToolBtn>
              <ToolBtn $w={10}><Chev /></ToolBtn>
              <VSep $m={16} $r={7} />
              <WithText $gap={3}><WrapI />Wrap Text</WithText>
            </ToolRow>
            <ToolRow>
              <ToolBtn $w={21}><Lines ys={[3, 6, 9, 12]} xs={[[0, 14], [0, 10], [0, 14], [0, 10]]} /></ToolBtn>
              <ToolBtn $w={21}><Lines ys={[3, 6, 9, 12]} xs={[[1, 15], [3, 13], [1, 15], [3, 13]]} /></ToolBtn>
              <ToolBtn $w={21}><Lines ys={[3, 6, 9, 12]} xs={[[2, 16], [6, 16], [2, 16], [6, 16]]} /></ToolBtn>
              <VSep $m={3} />
              <ToolBtn $w={22}><IndentI out /></ToolBtn>
              <ToolBtn $w={22}><IndentI out={false} /></ToolBtn>
              <VSep $m={4} />
              <WithText><MergeI />Merge &amp; Center<IconBox $w={16}><Chev /></IconBox></WithText>
            </ToolRow>
          </Stack>
        </GroupBody>
        <GroupFoot><GroupLabel>Alignment</GroupLabel><LauncherSlot><Launcher /></LauncherSlot></GroupFoot>
      </Group>

      <Group $w={134}>
        <GroupBody>
          <Stack $pl={4}>
            <ToolRow><Combo $w={127}>General<Chev /></Combo></ToolRow>
            <ToolRow>
              <ToolBtn $w={22}><Svg width="11" height="18" viewBox="0 0 11 18"><path d="M9.500 4.500C8 2.500 2 2.500 2 5.500 2 9 9.500 8 9.500 12c0 3-6.500 3-8.500 1M5.500 1v16" fill="none" stroke="#555" strokeWidth="1.400" /></Svg></ToolBtn>
              <ToolBtn $w={10}><Chev /></ToolBtn>
              <ToolBtn $w={22}><Svg width="13" height="13" viewBox="0 0 13 13"><circle cx="3" cy="3" r="2.300" fill="none" stroke="#555" /><circle cx="10" cy="10" r="2.300" fill="none" stroke="#555" /><path d="M11 1L2 12" stroke="#555" /></Svg></ToolBtn>
              <ToolBtn $w={20}><Svg width="5" height="7" viewBox="0 0 5 7"><path d="M0 0h5v3L2 7H0l2-4H0z" fill="#555" /></Svg></ToolBtn>
              <VSep $m={5.5} />
              <ToolBtn $w={22}><DecI inc /></ToolBtn>
              <ToolBtn $w={22}><DecI inc={false} /></ToolBtn>
            </ToolRow>
          </Stack>
        </GroupBody>
        <GroupFoot><GroupLabel>Number</GroupLabel><LauncherSlot><Launcher /></LauncherSlot></GroupFoot>
      </Group>

      <Group $w={488}>
        <GroupBody>
          <BigBtn $w={72} $ml={4}>
            <BigIcon $shift={4}><CondI /></BigIcon>
            <BigText>Conditional</BigText>
            <BigText>Formatting<Chev /></BigText>
          </BigBtn>
          <BigBtn $w={62}>
            <BigIcon><TableI /></BigIcon>
            <BigText>Format as</BigText>
            <BigText>Table<Chev /></BigText>
          </BigBtn>
          <Gallery>
            <GalleryGrid>
              <Style $bg="#fff" $fg="#111" $bd="#c6c6c6" $bw={2}>Normal</Style>
              <Style $bg="#ffc7ce" $fg="#9c0006">Bad</Style>
              <Style $bg="#c6efce" $fg="#006100">Good</Style>
              <Style $bg="#ffeb9c" $fg="#9c5700">Neutral</Style>
              <Style $bg="#f2f2f2" $fg="#fa7d00" $bd="#9a9a9a" $bold>Calculation</Style>
              <Style $bg="#a5a5a5" $fg="#fff" $bd="#3f3f3f" $bw={2} $bold>Check Cell</Style>
            </GalleryGrid>
            <GalleryScroll>
              <GalleryBtn><Svg width="7" height="4" viewBox="0 0 7 4"><path d="M0 4h7L3.500 0z" fill="#c4c4c4" /></Svg></GalleryBtn>
              <GalleryBtn><Chev c="#777" /></GalleryBtn>
              <GalleryBtn><Svg width="7" height="7" viewBox="0 0 7 7"><path d="M0 .5h7" stroke="#777" /><path d="M0 3h7L3.500 7z" fill="#777" /></Svg></GalleryBtn>
            </GalleryScroll>
          </Gallery>
        </GroupBody>
        <GroupFoot><GroupLabel>Styles</GroupLabel></GroupFoot>
      </Group>

      <Group $w={133}>
        <GroupBody>
          <BigBtn $w={46}>
            <BigIcon><InsertI /></BigIcon>
            <BigText>Insert</BigText>
            <BigText><Chev /></BigText>
          </BigBtn>
          <BigBtn $w={40}>
            <BigIcon><DeleteI /></BigIcon>
            <BigText>Delete</BigText>
            <BigText><Chev /></BigText>
          </BigBtn>
          <BigBtn $w={43}>
            <BigIcon><FormatI /></BigIcon>
            <BigText>Format</BigText>
            <BigText><Chev /></BigText>
          </BigBtn>
        </GroupBody>
        <GroupFoot><GroupLabel>Cells</GroupLabel></GroupFoot>
      </Group>

      <Group $w={185}>
        <GroupBody>
          <EditCol>
            <SmallRow><IconBox $w={14}><SigmaI /></IconBox>AutoSum<IconBox $w={14}><Chev /></IconBox></SmallRow>
            <SmallRow><IconBox $w={14}><FillDownI /></IconBox>Fill<Chev /></SmallRow>
            <SmallRow><IconBox $w={14}><EraserI /></IconBox>Clear<Chev /></SmallRow>
          </EditCol>
          <BigBtn $w={43}>
            <BigIcon><SortI /></BigIcon>
            <BigText>Sort &amp;</BigText>
            <BigText>Filter<Chev /></BigText>
          </BigBtn>
          <BigBtn $w={43}>
            <BigIcon><FindI /></BigIcon>
            <BigText>Find &amp;</BigText>
            <BigText>Select<Chev /></BigText>
          </BigBtn>
        </GroupBody>
        <GroupFoot><GroupLabel>Editing</GroupLabel></GroupFoot>
      </Group>

      <Collapse><Svg width="10" height="6" viewBox="0 0 10 6"><path d="M.5 5.500L5 1l4.500 4.500" fill="none" stroke="#666" strokeWidth="1.300" /></Svg></Collapse>
    </Ribbon>

    <FormulaBar>
      <NameBox>B7<Chev /></NameBox>
      <Grip><Svg width="3" height="12" viewBox="0 0 3 12"><path d="M0 0h3v2H0zM0 5h3v2H0zM0 10h3v2H0z" fill="#999" /></Svg></Grip>
      <FxBox>
        <Svg width="13" height="13" viewBox="0 0 13 13"><path d="M1 1l11 11M12 1L1 12" stroke="#b8b8b8" strokeWidth="1.500" /></Svg>
        <Svg width="14" height="12" viewBox="0 0 14 12"><path d="M1 6l4 4 8-9" fill="none" stroke="#b8b8b8" strokeWidth="2" /></Svg>
        <FxGlyph>fx</FxGlyph>
      </FxBox>
      <FormulaInput>
        =Principal + Simple_Interest
        <Svg width="10" height="6" viewBox="0 0 10 6"><path d="M1 1l4 4 4-4" fill="none" stroke="#555" strokeWidth="1.500" /></Svg>
      </FormulaInput>
    </FormulaBar>

    <SheetArea>
      <GridWrap>
        <HeaderRow>
          <Corner><Svg width="45" height="35" viewBox="0 0 45 35"><path d="M45 0v35H0z" fill="#b9b9b9" /></Svg></Corner>
          <ColHead>A</ColHead>
          <ColHead $active>B</ColHead>
          <ColHead>C</ColHead>
          <ColHead>D</ColHead>
          <ColHead />
        </HeaderRow>
        {[
          { a: "Prinicipal", b: "10000", fill: "#e8eef8", bd: "#2f74d0" },
          { a: "Rate of interest", b: "0.05" },
          { a: "Period", b: "5" },
          {},
          { a: "Simple interest", b: "=(Principal*ROI*Period)", fill: "#f9e8e8", bd: "#cf3a46" },
          {},
          { a: "Amount", active: true },
          {}, {}, {}, {}, {}, {}, {},
        ].map((r: any, i) => (
          <Row key={i}>
            <RowHead $active={r.active}>{i + 1}</RowHead>
            <Cell>{r.a}</Cell>
            {r.active ? (
              <Cell $bd="#217346">
                =<Ref $c="#2a62c8">Principal</Ref>&nbsp;+&nbsp;<Ref $c="#c22436">Simple_Interest</Ref>
                <Handle />
              </Cell>
            ) : (
              <Cell $fill={r.fill} $bd={r.bd}>{r.b}</Cell>
            )}
            <Cell /><Cell /><Cell />
          </Row>
        ))}
      </GridWrap>
      <VScroll>
        <ScrollBtn><Svg width="8" height="5" viewBox="0 0 8 5"><path d="M0 5h8L4 0z" fill="#666" /></Svg></ScrollBtn>
        <VThumb />
        <Spacer />
        <ScrollBtn><Svg width="8" height="5" viewBox="0 0 8 5"><path d="M0 0h8L4 5z" fill="#666" /></Svg></ScrollBtn>
      </VScroll>
    </SheetArea>

    <SheetBar>
      <NavArrows>
        <Svg width="5" height="8" viewBox="0 0 5 8"><path d="M5 0v8L0 4z" fill="#c6c6c6" /></Svg>
        <Svg width="5" height="8" viewBox="0 0 5 8"><path d="M0 0v8l5-4z" fill="#c6c6c6" /></Svg>
      </NavArrows>
      <SheetTab>Sheet1</SheetTab>
      <AddSheet>
        <Svg width="17" height="17" viewBox="0 0 17 17"><circle cx="8.500" cy="8.500" r="7.800" fill="none" stroke="#888" /><path d="M8.500 4v9M4 8.500h9" stroke="#777" strokeWidth="1.200" /></Svg>
      </AddSheet>
      <HGrip><Svg width="3" height="11" viewBox="0 0 3 11"><path d="M0 0h2v2H0zM0 4h2v2H0zM0 8h2v2H0z" fill="#999" /></Svg></HGrip>
      <HScroll>
        <ScrollBtn><Svg width="5" height="8" viewBox="0 0 5 8"><path d="M5 0v8L0 4z" fill="#555" /></Svg></ScrollBtn>
        <HThumb />
        <Spacer />
        <ScrollBtn><Svg width="5" height="8" viewBox="0 0 5 8"><path d="M0 0v8l5-4z" fill="#555" /></Svg></ScrollBtn>
      </HScroll>
    </SheetBar>

    <StatusBar>
      Ready
      <ZoomSign $ml={14}>
        <Svg width="13" height="13" viewBox="0 0 13 13"><circle cx="2.500" cy="2.500" r="2.500" fill="#555" /><path d="M5 1h8v12H1V5" fill="#fff" stroke="#666" /><path d="M3 7h8M3 9h8M3 11h8" stroke="#777" strokeDasharray="1 1" /></Svg>
      </ZoomSign>
      <StatusRight>
        <ViewBtn $on><Svg width="12" height="12" viewBox="0 0 12 12"><path d="M.5 .5h11v11H.5zM.5 4h11M.5 8h11M4 .5v11M8 .5v11" fill="none" stroke="#666" /></Svg></ViewBtn>
        <ViewBtn><Svg width="12" height="12" viewBox="0 0 12 12"><path d="M.5 .5h11v11H.5zM3.500 3.500h5v5h-5z" fill="none" stroke="#777" /></Svg></ViewBtn>
        <ViewBtn><Svg width="12" height="12" viewBox="0 0 12 12"><path d="M.5 .5h11v11H.5zM.5 8h6V.5" fill="none" stroke="#777" /></Svg></ViewBtn>
        <ZoomSign $ml={4}><Svg width="9" height="1" viewBox="0 0 9 1"><path d="M1 .5h7" stroke="#555" /></Svg></ZoomSign>
        <ZoomTrack><ZoomMark /><ZoomThumb /></ZoomTrack>
        <Svg width="10" height="10" viewBox="0 0 10 10"><path d="M0 5h10M5 0v10" stroke="#555" /></Svg>
        <ZoomPct>210%</ZoomPct>
      </StatusRight>
    </StatusBar>

    <Taskbar>
      <Start><WinLogo /></Start>
      <Search>
        <Cortana />
        <SearchText>Ask me anything</SearchText>
        <Mic />
      </Search>
      <TaskView><TaskViewI /></TaskView>
      <App><EdgeI /></App>
      <App><FolderI /></App>
      <App><StoreI /></App>
      <App><ChromeI /></App>
      <App $active><ExcelI /></App>
      <App><OutlookI /></App>
      <App><WordI /></App>
      <App><SkypeI /></App>
      <App><ClockI /></App>
      <App><GearI /></App>
      <Tray>
        <TraySlot><Svg width="14" height="8" viewBox="0 0 14 8"><path d="M.5 7.500L7 1l6.500 6.500" fill="none" stroke="#eee" strokeWidth="1.200" /></Svg></TraySlot>
        <TraySlot><Svg width="16" height="15" viewBox="0 0 16 15"><path d="M1 14C1 8 7 2 14 1M5 14c0-3 3-7 7-8M9 14c0-1.500 1-3 3-4" fill="none" stroke="#ccc" /><circle cx="13" cy="13" r="1.500" fill="#fff" /></Svg></TraySlot>
        <TraySlot><Svg width="18" height="14" viewBox="0 0 18 14"><path d="M1 4.500h3L8 1v12L4 9.500H1z" fill="none" stroke="#ddd" /><path d="M11 4.500c1 2 1 3 0 5M14 2.500c1.800 3 1.800 6 0 9" fill="none" stroke="#ccc" /></Svg></TraySlot>
        <TraySlot><Svg width="18" height="11" viewBox="0 0 18 11"><path d="M1.500 .5v3h3M3 3v7.500h14v-8H5" fill="none" stroke="#eee" /><rect x="4" y="4" width="12" height="6" fill="#eee" /></Svg></TraySlot>
        <Clock>10:41 PM<br />1/25/2017</Clock>
        <Notify>
          <Svg width="19" height="18" viewBox="0 0 19 18"><path d="M0 0h19v14h-6l-2 3v-3H0z" fill="#f2f2f2" /><path d="M3 4h11M3 7h11M3 10h8" stroke="#777" /></Svg>
          <NotifyBadge>2</NotifyBadge>
        </Notify>
      </Tray>
    </Taskbar>
  </Window>
);

export default App_;
